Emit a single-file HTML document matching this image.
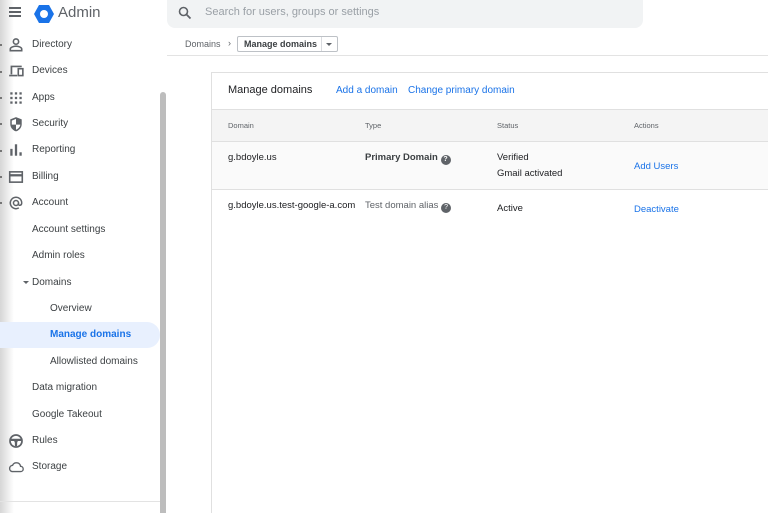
<!DOCTYPE html>
<html><head><meta charset="utf-8"><style>
*{margin:0;padding:0;box-sizing:border-box}
html,body{width:768px;height:513px;overflow:hidden}
body{background:#fff;font-family:"Liberation Sans",Arial,sans-serif;position:relative;color:#202124}
.shadow{position:absolute;left:0;top:0;width:14px;height:513px;background:linear-gradient(90deg,#d6d6d6,rgba(255,255,255,0))}
.nav{position:absolute;left:0;top:0;font-size:10px;color:#3c4043}
.nav .t{position:absolute;white-space:nowrap}
.ic{position:absolute;left:8px;width:16px;height:16px}
.dot{position:absolute;left:0;width:2px;height:2px;background:#555;border-radius:1px}
a{color:#1a73e8;text-decoration:none}
.abs{position:absolute;white-space:nowrap}
</style></head><body>
<div class="shadow"></div>
<div class="abs" style="left:9px;top:7px;width:12px;height:10px;border-top:2px solid #5f6368;border-bottom:2px solid #5f6368"><div style="margin-top:2px;height:2px;background:#5f6368"></div></div>
<svg class="abs" style="left:34px;top:4px" width="20" height="20" viewBox="0 0 20 20"><polygon points="5,1 15,1 20,10 15,19 5,19 0,10" fill="#1a73e8"/><circle cx="10" cy="10" r="4" fill="#fff"/></svg>
<div class="abs" style="left:58px;top:4px;font-size:15px;color:#5f6368">Admin</div>
<div class="abs" style="left:167px;top:0;width:476px;height:28px;background:#f1f3f4;border-radius:0 0 8px 8px"></div>
<svg class="abs" style="left:178px;top:6px" width="14" height="14" viewBox="0 0 14 14"><circle cx="5.5" cy="5.5" r="4" fill="none" stroke="#5f6368" stroke-width="1.6"/><line x1="8.5" y1="8.5" x2="12.5" y2="12.5" stroke="#5f6368" stroke-width="1.8"/></svg>
<div class="abs" style="left:205px;top:6px;font-size:11px;color:#9aa0a6">Search for users, groups or settings</div>
<div class="abs" style="left:185px;top:39px;font-size:9px;color:#5f6368">Domains</div>
<div class="abs" style="left:228px;top:38px;font-size:9px;color:#5f6368">›</div>
<div class="abs" style="left:237px;top:36px;width:101px;height:16px;border:1px solid #bdc1c6;border-radius:2px"></div>
<div class="abs" style="left:321px;top:37px;width:1px;height:14px;background:#dadce0"></div>
<div class="abs" style="left:244px;top:39px;font-size:9px;font-weight:bold;color:#3c4043">Manage domains</div>
<div class="abs" style="left:326px;top:43px;width:0;height:0;border-left:3px solid transparent;border-right:3px solid transparent;border-top:3px solid #5f6368"></div>
<div class="abs" style="left:167px;top:55px;width:601px;height:1px;background:#e3e3e3"></div>
<div class="abs" style="left:160px;top:92px;width:6px;height:421px;background:#bdbdbd;border-radius:3px 3px 0 0"></div>
<div class="abs" style="left:211px;top:72px;width:560px;height:460px;border:1px solid #e0e0e0;border-right:none"></div>
<div class="abs" style="left:228px;top:84px;font-size:11px;color:#202124">Manage domains</div>
<div class="abs" style="left:336px;top:85px;font-size:10px"><a>Add a domain</a></div>
<div class="abs" style="left:408px;top:85px;font-size:10px"><a>Change primary domain</a></div>
<div class="abs" style="left:212px;top:109px;width:556px;height:33px;background:#f4f4f4;border-top:1px solid #e0e0e0;border-bottom:1px solid #e0e0e0"></div>
<div class="abs" style="left:228px;top:121px;font-size:7.5px;color:#5f6368">Domain</div>
<div class="abs" style="left:365px;top:121px;font-size:7.5px;color:#5f6368">Type</div>
<div class="abs" style="left:497px;top:121px;font-size:7.5px;color:#5f6368">Status</div>
<div class="abs" style="left:634px;top:121px;font-size:7.5px;color:#5f6368">Actions</div>
<div class="abs" style="left:212px;top:142px;width:556px;height:48px;background:#fafafa;border-bottom:1px solid #e0e0e0"></div>
<div class="abs" style="left:228px;top:152px;font-size:9.5px">g.bdoyle.us</div>
<div class="abs" style="left:365px;top:152px;font-size:9.5px;font-weight:bold;color:#3c4043">Primary Domain <span style="display:inline-block;width:10px;height:10px;border-radius:50%;background:#5f6368;color:#fff;font-size:7px;text-align:center;line-height:10px;vertical-align:-1px">?</span></div>
<div class="abs" style="left:497px;top:152px;font-size:9.5px">Verified</div>
<div class="abs" style="left:497px;top:168px;font-size:9.5px">Gmail activated</div>
<div class="abs" style="left:634px;top:161px;font-size:9.5px"><a>Add Users</a></div>
<div class="abs" style="left:228px;top:200px;font-size:9.5px">g.bdoyle.us.test-google-a.com</div>
<div class="abs" style="left:365px;top:200px;font-size:9.5px;color:#5f6368">Test domain alias <span style="display:inline-block;width:10px;height:10px;border-radius:50%;background:#5f6368;color:#fff;font-size:7px;text-align:center;line-height:10px;vertical-align:-1px">?</span></div>
<div class="abs" style="left:497px;top:203px;font-size:9.5px">Active</div>
<div class="abs" style="left:634px;top:204px;font-size:9.5px"><a>Deactivate</a></div>
<div class="abs" style="left:0;top:322px;width:160px;height:26px;background:#e8f0fe;border-radius:0 13px 13px 0"></div>
<div class="nav">
<div class="dot" style="top:44px"></div><div class="dot" style="top:71px"></div><div class="dot" style="top:97px"></div><div class="dot" style="top:123px"></div><div class="dot" style="top:150px"></div><div class="dot" style="top:176px"></div><div class="dot" style="top:202px"></div>
<svg class="ic" style="top:37px" viewBox="0 0 14 14"><circle cx="7" cy="4" r="2.3" fill="none" stroke="#5f6368" stroke-width="1.4"/><path d="M2 12v-1.5c0-1.5 3-2.5 5-2.5s5 1 5 2.5V12z" fill="none" stroke="#5f6368" stroke-width="1.4"/></svg>
<svg class="ic" style="top:63px" viewBox="0 0 14 14"><path d="M3 10V3h9M1 11h7" fill="none" stroke="#5f6368" stroke-width="1.5"/><rect x="9" y="5" width="4" height="6" fill="none" stroke="#5f6368" stroke-width="1.4"/></svg>
<svg class="ic" style="top:90px" viewBox="0 0 14 14" fill="#5f6368"><rect x="2" y="2" width="2" height="2"/><rect x="6" y="2" width="2" height="2"/><rect x="10" y="2" width="2" height="2"/><rect x="2" y="6" width="2" height="2"/><rect x="6" y="6" width="2" height="2"/><rect x="10" y="6" width="2" height="2"/><rect x="2" y="10" width="2" height="2"/><rect x="6" y="10" width="2" height="2"/><rect x="10" y="10" width="2" height="2"/></svg>
<svg class="ic" style="top:116px" viewBox="0 0 14 14"><path d="M7 1l5 2v4c0 3-2 5.5-5 6.5C4 12.5 2 10 2 7V3z" fill="#5f6368"/><path d="M7 2.5v5H3.3V4z" fill="#fff"/><path d="M7 7.5h3.8C10.5 9.5 9 11.3 7 12z" fill="#fff"/></svg>
<svg class="ic" style="top:142px" viewBox="0 0 14 14" fill="#5f6368"><rect x="2" y="6" width="2" height="6"/><rect x="6" y="2" width="2" height="10"/><rect x="10" y="9" width="2" height="3"/></svg>
<svg class="ic" style="top:169px" viewBox="0 0 14 14"><rect x="1.5" y="2.5" width="11" height="9" fill="none" stroke="#5f6368" stroke-width="1.4"/><rect x="1.5" y="4.5" width="11" height="2" fill="#5f6368"/></svg>
<svg class="ic" style="top:195px" viewBox="0 0 14 14"><circle cx="7" cy="7" r="2.2" fill="none" stroke="#5f6368" stroke-width="1.3"/><path d="M9.2 7v1c0 1.5 2.8 1.5 2.8-1A5 5 0 1 0 9.5 11.3" fill="none" stroke="#5f6368" stroke-width="1.3"/></svg>
<svg class="ic" style="top:433px" viewBox="0 0 14 14"><circle cx="7" cy="7" r="6" fill="#5f6368"/><circle cx="7" cy="7" r="4.5" fill="#fff"/><path d="M2.5 6h9M7 7.5v4" stroke="#5f6368" stroke-width="2"/><circle cx="7" cy="7" r="1.5" fill="#5f6368"/></svg>
<svg class="ic" style="top:459px" viewBox="0 0 14 14"><path d="M3.5 11h7.5a2.3 2.3 0 0 0 0-4.6A3.7 3.7 0 0 0 4 5.5 2.8 2.8 0 0 0 3.5 11z" fill="none" stroke="#5f6368" stroke-width="1.2"/></svg>
<div class="t" style="left:32px;top:39px">Directory</div>
<div class="t" style="left:32px;top:65px">Devices</div>
<div class="t" style="left:32px;top:92px">Apps</div>
<div class="t" style="left:32px;top:118px">Security</div>
<div class="t" style="left:32px;top:144px">Reporting</div>
<div class="t" style="left:32px;top:171px">Billing</div>
<div class="t" style="left:32px;top:197px">Account</div>
<div class="t" style="left:32px;top:224px">Account settings</div>
<div class="t" style="left:32px;top:250px">Admin roles</div>
<div class="abs" style="left:23px;top:281px;width:0;height:0;border-left:3px solid transparent;border-right:3px solid transparent;border-top:3px solid #5f6368"></div>
<div class="t" style="left:32px;top:277px">Domains</div>
<div class="t" style="left:50px;top:303px">Overview</div>
<div class="t" style="left:50px;top:329px;color:#1a73e8;font-weight:bold">Manage domains</div>
<div class="t" style="left:50px;top:356px">Allowlisted domains</div>
<div class="t" style="left:32px;top:382px">Data migration</div>
<div class="t" style="left:32px;top:409px">Google Takeout</div>
<div class="t" style="left:32px;top:435px">Rules</div>
<div class="t" style="left:32px;top:461px">Storage</div>
</div>
<div class="abs" style="left:0;top:501px;width:160px;height:1px;background:#e3e3e3"></div>
</body></html>
